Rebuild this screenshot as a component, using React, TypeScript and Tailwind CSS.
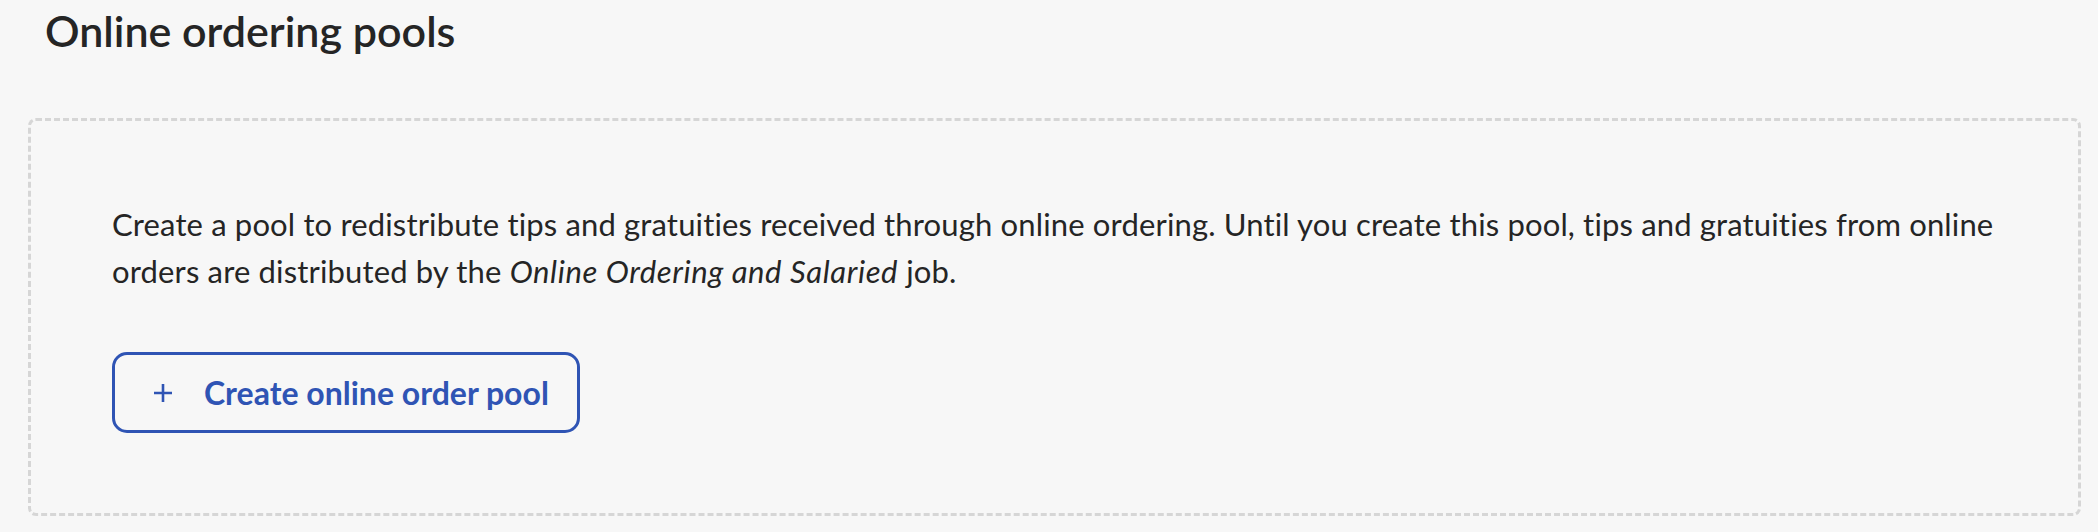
import React from 'react';

const PlusIcon: React.FC = () => (
  <svg width="20" height="20" viewBox="0 0 20 20" fill="none" aria-hidden="true">
    <path d="M10 1v18M1 10h18" stroke="currentColor" strokeWidth="2.6" />
  </svg>
);

const App: React.FC = () => {
  return (
    <div
      className="min-h-[532px] w-full bg-[#f7f7f7] pt-[3px] pb-[17px] text-[#252525] [font-variant-ligatures:no-common-ligatures]"
      style={{ fontFamily: 'Lato, "Noto Sans", sans-serif' }}
    >
      <h2 className="ml-[45px] text-[43px] font-semibold leading-[56px]">Online ordering pools</h2>

      <div className="ml-[28px] mr-[17px] mt-[59px] rounded-lg border-[3px] border-dashed border-[#d6d6d6] px-[81px] pb-[80px] pt-[80px]">
        <p className="text-[31px] leading-[47px] tracking-[0.15px]">
          Create a pool to redistribute tips and gratuities received through online ordering. Until you create this
          pool, tips and gratuities from online orders are distributed by the{' '}
          <em className="italic tracking-[0.6px]">Online Ordering and Salaried</em> job.
        </p>

        <button
          type="button"
          className="mt-[57px] flex h-[81px] w-[468px] items-center rounded-[15px] border-[3px] border-[#2f54b4] pl-[38px] text-[32px] font-bold text-[#2f54b4]"
        >
          <PlusIcon />
          <span className="ml-[31px]">Create online order pool</span>
        </button>
      </div>
    </div>
  );
};

export default App;
